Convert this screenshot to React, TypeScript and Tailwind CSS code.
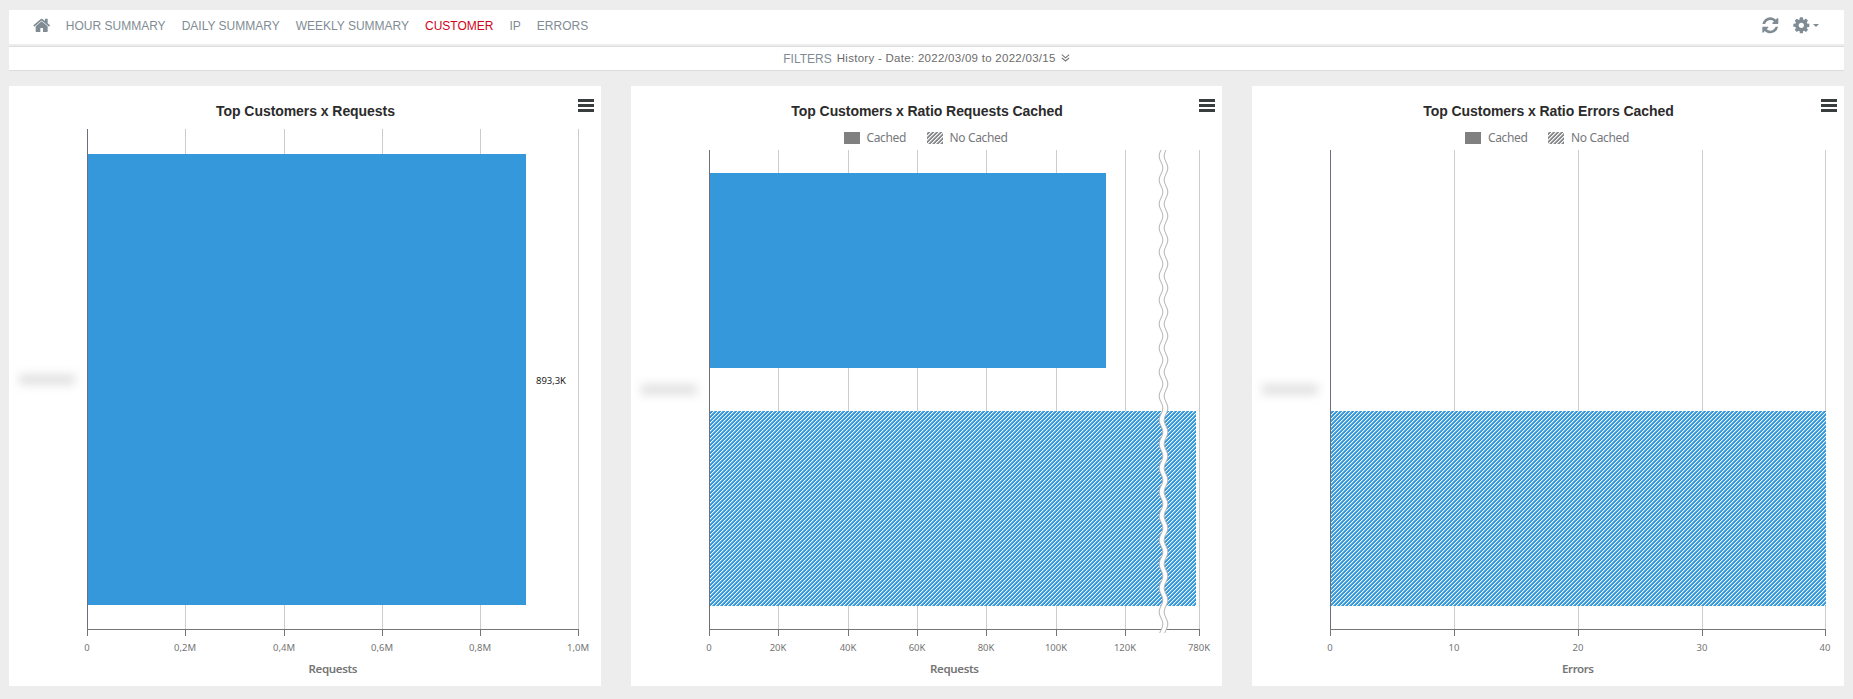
type Tick = { x: number; label: string };
type Bar = { y: number; w: number; h: number; hatched?: boolean; value?: string };
type Chart = {
  title: string;
  axisTitle: string;
  width: string;
  legend: boolean;
  ticks: Tick[];
  bars: Bar[];
  labelY: number;
  breakX?: number;
};

const navItems = ["HOUR SUMMARY", "DAILY SUMMARY", "WEEKLY SUMMARY", "CUSTOMER", "IP", "ERRORS"];

const AXIS_Y = 543;

const charts: Chart[] = [
  {
    title: "Top Customers x Requests",
    axisTitle: "Requests",
    width: "w-[592px]",
    legend: false,
    ticks: [
      { x: 78, label: "0" },
      { x: 176, label: "0,2M" },
      { x: 275, label: "0,4M" },
      { x: 373, label: "0,6M" },
      { x: 471, label: "0,8M" },
      { x: 569, label: "1,0M" },
    ],
    bars: [{ y: 68, w: 438, h: 451, value: "893,3K" }],
    labelY: 294,
  },
  {
    title: "Top Customers x Ratio Requests Cached",
    axisTitle: "Requests",
    width: "w-[591px]",
    legend: true,
    ticks: [
      { x: 78, label: "0" },
      { x: 147, label: "20K" },
      { x: 217, label: "40K" },
      { x: 286, label: "60K" },
      { x: 355, label: "80K" },
      { x: 425, label: "100K" },
      { x: 494, label: "120K" },
      { x: 568, label: "780K" },
    ],
    bars: [
      { y: 87, w: 396, h: 195 },
      { y: 325, w: 486, h: 195, hatched: true },
    ],
    labelY: 304,
    breakX: 530,
  },
  {
    title: "Top Customers x Ratio Errors Cached",
    axisTitle: "Errors",
    width: "w-[592px]",
    legend: true,
    ticks: [
      { x: 78, label: "0" },
      { x: 202, label: "10" },
      { x: 326, label: "20" },
      { x: 450, label: "30" },
      { x: 573, label: "40" },
    ],
    bars: [{ y: 325, w: 495, h: 195, hatched: true }],
    labelY: 304,
  },
];

// points of one wavy edge of the axis break
function wave(x: number, top: number, bottom: number) {
  const points: string[] = [];
  for (let y = top; y <= bottom; y += 1) {
    points.push(`${(x - 1.8 * Math.sin(((y - 64) / 24) * 2 * Math.PI)).toFixed(2)} ${y}`);
  }
  return points;
}

function HomeIcon() {
  return (
    <svg viewBox="0 0 1664 1792" className="h-[18.67px] w-[17.33px]" fill="currentColor">
      <path d="M1408 992v480q0 26-19 45t-45 19H960v-384H704v384H320q-26 0-45-19t-19-45V992q0-1 .5-3t.5-3l575-474 575 474q1 2 1 6zm223-69l-62 74q-8 9-21 11h-3q-13 0-21-7L832 424l-692 577q-12 8-24 7-13-2-21-11l-62-74q-8-10-7-23.5T37 878l719-599q32-26 76-26t76 26l244 204V288q0-14 9-23t23-9h192q14 0 23 9t9 23v408l219 182q10 8 11 21.5t-7 23.5z" />
    </svg>
  );
}

function RefreshIcon() {
  return (
    <svg viewBox="0 0 1792 1792" className="size-[18.67px]" fill="currentColor">
      <path d="M1639 1056q0 5-1 7-64 268-268 434.5T892 1664q-146 0-282.5-55T366 1452l-129 129q-19 19-45 19t-45-19-19-45v-448q0-26 19-45t45-19h448q26 0 45 19t19 45-19 45l-137 137q71 66 161 102t187 36q134 0 250-65t186-179q11-17 53-117 8-23 30-23h192q13 0 22.5 9.5t9.5 22.5zm25-800v448q0 26-19 45t-45 19h-448q-26 0-45-19t-19-45 19-45l138-138Q1097 384 896 384q-134 0-250 65T460 628q-11 17-53 117-8 23-30 23H178q-13 0-22.5-9.5T146 736v-7q65-268 270-434.5T896 128q146 0 284 55.5T1425 340l130-129q19-19 45-19t45 19 19 45z" />
    </svg>
  );
}

function CogIcon() {
  return (
    <svg viewBox="0 0 1792 1792" className="size-[18.67px]" fill="currentColor">
      <path d="M1152 896q0-106-75-181t-181-75-181 75-75 181 75 181 181 75 181-75 75-181zm512-109v222q0 12-8 23t-20 13l-185 28q-19 54-39 91 35 50 107 138 10 12 10 25t-9 23q-27 37-99 108t-94 71q-12 0-26-9l-138-108q-44 23-91 38-16 136-29 186-7 28-36 28H785q-14 0-24.5-8.5T749 1634l-28-184q-49-16-90-37l-141 107q-10 9-25 9-14 0-25-11-126-114-165-168-7-10-7-23 0-12 8-23 15-21 51-66.5t54-70.5q-27-50-41-99l-183-27q-13-2-21-12.5t-8-23.5V783q0-12 8-23t19-13l186-28q14-46 39-92-40-57-107-138-10-12-10-24 0-10 9-23 26-36 98.5-107.5T465 263q13 0 26 10l138 107q44-23 91-38 16-136 29-186 7-28 36-28h222q14 0 24.5 8.5T1043 158l28 184q49 16 90 37l142-107q9-9 24-9 13 0 25 10 129 119 165 170 7 8 7 22 0 12-8 23-15 21-51 66.5t-54 70.5q26 50 41 98l183 28q13 2 21 12.5t8 23.5z" />
    </svg>
  );
}

function Hatch({ id, soft }: { id: string; soft: string }) {
  return (
    <pattern id={id} width="4" height="4" patternUnits="userSpaceOnUse">
      <rect width="4" height="4" fill="currentColor" />
      {[0, 1, 2, 3].map((i) => (
        <g key={i} shapeRendering="crispEdges">
          <rect x={3 - i} y={i} width="1" height="1" fill="#f4fafd" />
          <rect x={(4 - i) % 4} y={i} width="1" height="1" fill={soft} />
        </g>
      ))}
    </pattern>
  );
}

function Legend() {
  return (
    <div className="flex h-[26px] items-center justify-center pt-[9px] pr-[2px] font-['Noto_Sans'] text-[12px] leading-[14px] text-[#76777c]">
      <span className="mr-[7px] h-[12px] w-[16px] bg-[#808080]" />
      <span className="w-[39px] whitespace-nowrap tracking-[-0.35px]">Cached</span>
      <svg className="mr-[7px] ml-[21px] h-[12px] w-[16px] text-[#8a8a8a]">
        <defs>
          <Hatch id="hatch-gray" soft="#c4c4c4" />
        </defs>
        <rect width="16" height="12" fill="url(#hatch-gray)" />
      </svg>
      <span className="w-[58px] whitespace-nowrap tracking-[-0.35px]">No Cached</span>
    </div>
  );
}

function Plot({ chart, id }: { chart: Chart; id: string }) {
  const first = chart.ticks[0].x;
  const last = chart.ticks[chart.ticks.length - 1].x;
  const offset = chart.legend ? 60 : 34;
  const top = chart.legend ? 64 : 43;
  const left = chart.breakX ? wave(chart.breakX, top, 547) : [];
  const right = chart.breakX ? wave(chart.breakX + 5, top, 547) : [];

  return (
    <svg
      viewBox={`0 ${offset} 592 ${600 - offset}`}
      width="592"
      height={600 - offset}
      className="block font-['Noto_Sans'] text-[#3598db]"
    >
      <defs>
        <Hatch id={id} soft="#70b7e6" />
      </defs>

      {chart.ticks.slice(1).map((t) => (
        <rect key={t.x} x={t.x} y={top} width="1" height={AXIS_Y - top} fill="#ccc" />
      ))}

      {chart.bars.map((b) => (
        <g key={b.y}>
          <rect
            x={first + 1}
            y={b.y}
            width={b.w}
            height={b.h}
            fill={b.hatched ? `url(#${id})` : "currentColor"}
          />
          {b.value && (
            <text x={first + 449} y={b.y + b.h / 2 + 4} fontSize="9.5" fill="#222" textLength="30">
              {b.value}
            </text>
          )}
        </g>
      ))}

      {/* axes */}
      <rect x={first} y={top} width="1" height={AXIS_Y - top} fill="#6e7079" />
      <rect x={first} y={AXIS_Y} width={last - first + 1} height="1" fill="#757575" />
      {chart.ticks.map((t) => (
        <g key={t.label}>
          <rect x={t.x} y={AXIS_Y} width="1" height="7" fill="#757575" />
          <text x={t.x} y="565" fontSize="9.5" textAnchor="middle" fill="#757575">
            {t.label}
          </text>
        </g>
      ))}

      {chart.breakX && (
        <>
          <path d={`M${left.join("L")}L${[...right].reverse().join("L")}Z`} fill="#fff" />
          <path d={`M${left.join("L")}M${right.join("L")}`} fill="none" stroke="#b4b4b4" />
        </>
      )}

      {/* masked customer name */}
      <rect x="10" y={chart.labelY - 6} width="56" height="11" fill="#e2e2e2" className="blur-[5px]" />

      <text
        x={(first + last) / 2 + 0.5}
        y="587"
        fontSize="11.5"
        fontWeight="600"
        textAnchor="middle"
        fill="#757575"
        textLength={chart.axisTitle === "Errors" ? 32 : 49}
      >
        {chart.axisTitle}
      </text>
    </svg>
  );
}

function ChartCard({ chart, id }: { chart: Chart; id: string }) {
  return (
    <section className={`relative h-[600px] overflow-hidden bg-white ${chart.width}`}>
      <h2 className="h-[34px] pt-[17px] pl-[1px] text-center text-[14px] leading-[16px] font-bold tracking-[-0.06px] text-[#2b2b2b]">
        {chart.title}
      </h2>
      <button className="absolute top-[13px] right-[7px] flex w-[16px] flex-col gap-[2px]">
        <span className="h-[3px] bg-[#3a3d3d]" />
        <span className="h-[3px] bg-[#3a3d3d]" />
        <span className="h-[3px] bg-[#3a3d3d]" />
      </button>
      {chart.legend && <Legend />}
      <Plot chart={chart} id={id} />
    </section>
  );
}

export default function App() {
  return (
    <div className="h-[699px] w-[1853px] overflow-hidden bg-[#ededed] px-[9px] pt-[10px] font-['Liberation_Sans',Arial,sans-serif]">
      <header className="flex h-[34px] items-center justify-between bg-white pr-[25px] pl-[23.5px] text-[12px] text-[#7f8c94]">
        <nav className="flex items-center">
          <a className="-mt-[3px] mr-[16px]">
            <HomeIcon />
          </a>
          {navItems.map((item) => (
            <a
              key={item}
              className={`-mt-[2px] mr-[16px] leading-[14px] ${item === "CUSTOMER" ? "text-[#d0021b]" : ""}`}
            >
              {item}
            </a>
          ))}
        </nav>
        <div className="-mt-[3px] flex items-center">
          <RefreshIcon />
          <span className="ml-[12.5px]">
            <CogIcon />
          </span>
          <span className="ml-[2px] border-x-[3.5px] border-t-[3.5px] border-x-transparent border-t-[#7f8c94]" />
        </div>
      </header>

      <div className="mt-[2px] flex h-[25px] items-center justify-center border-y border-[#dcdcdc] bg-white text-[12px] text-[#7f8c94]">
        <span>FILTERS</span>
        <span className="ml-[5px] w-[219px] text-[11.5px] tracking-[0.28px] whitespace-nowrap text-[#6b6b6b]">
          History - Date: 2022/03/09 to 2022/03/15
        </span>
        <svg viewBox="0 0 9 8" className="-mt-[2px] ml-[5px] h-[8px] w-[9px]" fill="none" stroke="#757575" strokeWidth="1.1">
          <path d="M.8.6l3.7 3.2L8.2.6M.8 3.8L4.5 7l3.7-3.2" />
        </svg>
      </div>

      <main className="mt-[15px] flex gap-[30px]">
        {charts.map((chart, i) => (
          <ChartCard key={chart.title} chart={chart} id={`hatch-${i}`} />
        ))}
      </main>
    </div>
  );
}
